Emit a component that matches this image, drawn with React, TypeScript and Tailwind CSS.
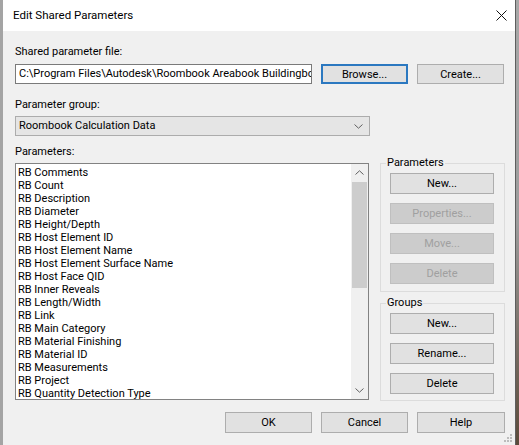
import React from 'react';
import clsx from 'clsx';

const parameters = [
  'RB Comments',
  'RB Count',
  'RB Description',
  'RB Diameter',
  'RB Height/Depth',
  'RB Host Element ID',
  'RB Host Element Name',
  'RB Host Element Surface Name',
  'RB Host Face QID',
  'RB Inner Reveals',
  'RB Length/Width',
  'RB Link',
  'RB Main Category',
  'RB Material Finishing',
  'RB Material ID',
  'RB Measurements',
  'RB Project',
  'RB Quantity Detection Type',
];

type BtnProps = {
  label: string;
  disabled?: boolean;
  focused?: boolean;
  className?: string;
};

const Btn: React.FC<BtnProps> = ({ label, disabled, focused, className }) => (
  <button
    disabled={disabled}
    className={clsx(
      'flex items-center justify-center leading-none',
      disabled && 'bg-[#cccccc] border border-[#bfbfbf] text-[#a0a0a0]',
      !disabled && !focused && 'bg-[#e1e1e1] border border-[#adadad] text-black',
      focused && 'bg-[#e1e1e1] border-2 border-[#2b78c0] text-black',
      className
    )}
  >
    {label}
  </button>
);

const Chevron: React.FC<{ up?: boolean; className?: string }> = ({ up, className }) => (
  <svg width="9" height="5" viewBox="0 0 9 5" className={className}>
    <path
      d={up ? 'M0.5 4.5 L4.5 0.8 L8.5 4.5' : 'M0.5 0.5 L4.5 4.2 L8.5 0.5'}
      fill="none"
      stroke="#606060"
      strokeWidth="1"
    />
  </svg>
);

const GroupBox: React.FC<{ title: string; className?: string; children: React.ReactNode }> = ({
  title,
  className,
  children,
}) => (
  <fieldset className={clsx('border border-[#dcdcdc] w-[125px]', className)}>
    <legend className="ml-[5px] px-[1px] leading-[16px] text-black">{title}</legend>
    {children}
  </fieldset>
);

export default function App() {
  return (
    <div className="flex w-[519px] h-[445px] overflow-hidden bg-[#f0f0f0] font-['Roboto',sans-serif] text-[11px] text-black">
      {/* left edge */}
      <div className="w-[3px] bg-[#a4a4a4]"></div>

      {/* Window */}
      <div className="relative w-[512px] flex flex-col bg-[#f0f0f0]">
        {/* Title bar */}
        <div className="h-[31px] bg-white flex items-center justify-between pl-[10px] pr-[8px]">
          <span className="text-[11.5px] leading-none">Edit Shared Parameters</span>
          <svg width="11" height="11" viewBox="0 0 11 11">
            <path d="M0.5 0.5 L10.5 10.5 M10.5 0.5 L0.5 10.5" stroke="#111" strokeWidth="1" />
          </svg>
        </div>

        {/* Body */}
        <div className="flex flex-col pl-[12px] pr-[10px] pt-[13px]">
          <div className="h-[16px] leading-[16px]">Shared parameter file:</div>
          <div className="flex gap-[9px] mt-[4px]">
            <div className="w-[297px] h-[20px] border border-[#7a7a7a] bg-white pl-[3px] overflow-hidden whitespace-nowrap leading-[18px]">
              C:\Program Files\Autodesk\Roombook Areabook Buildingbook
            </div>
            <Btn label="Browse..." focused className="w-[87px] h-[20px]" />
            <Btn label="Create..." className="w-[87px] h-[20px]" />
          </div>

          <div className="h-[16px] leading-[16px] mt-[13px]">Parameter group:</div>
          <div className="mt-[3px] w-[355px] h-[20px] border border-[#acacac] bg-[#e5e5e5] flex items-center justify-between pl-[3px] pr-[6px]">
            <span>Roombook Calculation Data</span>
            <Chevron />
          </div>

          <div className="flex items-start gap-[11px] mt-[8px]">
            {/* Parameters list */}
            <div className="flex flex-col w-[355px]">
              <div className="h-[16px] leading-[16px]">Parameters:</div>
              <div className="mt-[3px] h-[237px] border border-[#828282] bg-white flex">
                <div className="flex-1 flex flex-col pl-[2px] pt-[2px] overflow-hidden">
                  {parameters.map((p) => (
                    <div key={p} className="h-[13px] leading-[13px] whitespace-nowrap">
                      {p}
                    </div>
                  ))}
                </div>
                <div className="w-[17px] flex flex-col bg-[#f0f0f0]">
                  <div className="h-[17px] flex items-center justify-center">
                    <Chevron up />
                  </div>
                  <div className="flex-1">
                    <div className="mt-[1px] mx-[1px] h-[106px] bg-[#cdcdcd]"></div>
                  </div>
                  <div className="h-[17px] flex items-center justify-center">
                    <Chevron />
                  </div>
                </div>
              </div>
            </div>

            {/* Right column */}
            <div className="flex flex-col mt-[11px]">
              <GroupBox title="Parameters">
                <div className="flex flex-col gap-[9px] pl-[9px] pt-[2px] pb-[7px]">
                  <Btn label="New..." className="w-[104px] h-[21px]" />
                  <Btn label="Properties..." disabled className="w-[104px] h-[21px]" />
                  <Btn label="Move..." disabled className="w-[104px] h-[21px]" />
                  <Btn label="Delete" disabled className="w-[104px] h-[21px]" />
                </div>
              </GroupBox>
              <GroupBox title="Groups" className="mt-[3px]">
                <div className="flex flex-col gap-[9px] pl-[9px] pt-[2px] pb-[6px]">
                  <Btn label="New..." className="w-[104px] h-[21px]" />
                  <Btn label="Rename..." className="w-[104px] h-[21px]" />
                  <Btn label="Delete" className="w-[104px] h-[21px]" />
                </div>
              </GroupBox>
            </div>
          </div>

          {/* Dialog buttons */}
          <div className="flex justify-end gap-[9px] mt-[11px]">
            <Btn label="OK" className="w-[87px] h-[21px]" />
            <Btn label="Cancel" className="w-[87px] h-[21px]" />
            <Btn label="Help" className="w-[88px] h-[21px]" />
          </div>
        </div>

        {/* size grip */}
        <svg width="8" height="8" viewBox="0 0 8 8" className="absolute right-[3px] bottom-[3px]">
          <rect x="6" y="0" width="2" height="2" fill="#bcbcbc" />
          <rect x="3" y="3" width="2" height="2" fill="#bcbcbc" />
          <rect x="6" y="3" width="2" height="2" fill="#bcbcbc" />
          <rect x="0" y="6" width="2" height="2" fill="#bcbcbc" />
          <rect x="3" y="6" width="2" height="2" fill="#bcbcbc" />
          <rect x="6" y="6" width="2" height="2" fill="#bcbcbc" />
        </svg>
      </div>

      {/* right edge / desktop behind */}
      <div className="flex-1 border-l border-[#5e5e5e] bg-gradient-to-b from-[#a8a8a8] via-[#9c9c9c] to-[#5b4a3a]"></div>
    </div>
  );
}
